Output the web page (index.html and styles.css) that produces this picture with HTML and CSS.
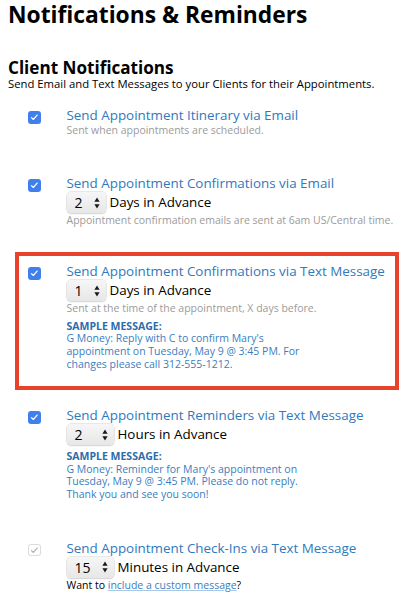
FILE: index.html
```html
<!DOCTYPE html>
<html lang="en">
<head>
    <meta charset="UTF-8">
    <meta name="viewport" content="width=device-width, initial-scale=1.0">
    <title>Notifications &amp; Reminders</title>
    <link rel="stylesheet" href="styles.css">
</head>
<body>
    <h1>Notifications &amp; Reminders</h1>

    <h2>Client Notifications</h2>
    <p class="intro">Send Email and Text Messages to your Clients for their Appointments.</p>

    <ul class="options">
        <li class="option">
            <span class="check"><svg viewBox="0 0 13 13"><path d="M3.6 6.9l2 1.9 3.9-4.6"/></svg></span>
            <div class="body">
                <div class="label">Send Appointment Itinerary via Email</div>
                <div class="note">Sent when appointments are scheduled.</div>
            </div>
        </li>

        <li class="option">
            <span class="check"><svg viewBox="0 0 13 13"><path d="M3.6 6.9l2 1.9 3.9-4.6"/></svg></span>
            <div class="body">
                <div class="label">Send Appointment Confirmations via Email</div>
                <div class="advance">
                    <span class="picker"><span class="value">2</span><svg viewBox="0 0 6 12"><path d="M3 0.5l2.6 4.2H0.4zM3 11.5l2.6-4.2H0.4z"/></svg></span>
                    Days in Advance
                </div>
                <div class="note">Appointment confirmation emails are sent at 6am US/Central time.</div>
            </div>
        </li>

        <li class="option highlight">
            <span class="check"><svg viewBox="0 0 13 13"><path d="M3.6 6.9l2 1.9 3.9-4.6"/></svg></span>
            <div class="body">
                <div class="label">Send Appointment Confirmations via Text Message</div>
                <div class="advance">
                    <span class="picker"><span class="value">1</span><svg viewBox="0 0 6 12"><path d="M3 0.5l2.6 4.2H0.4zM3 11.5l2.6-4.2H0.4z"/></svg></span>
                    Days in Advance
                </div>
                <div class="note">Sent at the time of the appointment, X days before.</div>
                <div class="sample">
                    <strong>SAMPLE MESSAGE:</strong>
                    G Money: Reply with C to confirm Mary's<br>
                    appointment on Tuesday, May 9 @ 3:45 PM. For<br>
                    changes please call 312-555-1212.
                </div>
            </div>
        </li>

        <li class="option">
            <span class="check"><svg viewBox="0 0 13 13"><path d="M3.6 6.9l2 1.9 3.9-4.6"/></svg></span>
            <div class="body">
                <div class="label">Send Appointment Reminders via Text Message</div>
                <div class="advance">
                    <span class="picker wide"><span class="value">2</span><svg viewBox="0 0 6 12"><path d="M3 0.5l2.6 4.2H0.4zM3 11.5l2.6-4.2H0.4z"/></svg></span>
                    Hours in Advance
                </div>
                <div class="sample">
                    <strong>SAMPLE MESSAGE:</strong>
                    G Money: Reminder for Mary's appointment on<br>
                    Tuesday, May 9 @ 3:45 PM. Please do not reply.<br>
                    Thank you and see you soon!
                </div>
            </div>
        </li>

        <li class="option">
            <span class="check off"><svg viewBox="0 0 13 13"><path d="M3.6 6.9l2 1.9 3.9-4.6"/></svg></span>
            <div class="body">
                <div class="label">Send Appointment Check-Ins via Text Message</div>
                <div class="advance">
                    <span class="picker wide"><span class="value">15</span><svg viewBox="0 0 6 12"><path d="M3 0.5l2.6 4.2H0.4zM3 11.5l2.6-4.2H0.4z"/></svg></span>
                    Minutes in Advance
                </div>
                <div class="custom">Want to <a href="#">include a custom message</a>?</div>
            </div>
        </li>
    </ul>
</body>
</html>
```

FILE: styles.css
```css
body {
    margin: 0;
    padding: 0 8px;
    font-family: "Open Sans", Arial, sans-serif;
    color: #000;
    background: #fff;
}
h1 {
    margin: 0;
    padding-top: 1px;
    font-size: 22.8px;
    line-height: 27px;
    font-weight: 700;
}
h2 {
    margin: 31px 0 0;
    font-size: 17.1px;
    line-height: 17px;
    font-weight: 700;
}
.intro {
    margin: 1px 0 0;
    font-size: 11.3px;
    line-height: 13px;
}

/* notification list */
.options {
    list-style: none;
    margin: 17px 0 0;
    padding: 0;
}
.option {
    display: flex;
    margin: 38px 0 0 7px;
    padding: 0 0 0 9px;
    border: 0 solid transparent;
    border-left-width: 4px;
}
.option:first-child {
    margin-top: 0;
}
.highlight {
    margin: 25px -5px -21px 7px;
    padding: 7px 0 16px 9px;
    border: 4px solid #e8412c;
}
.highlight + .option + .option {
    margin-top: 39px;
}
.check {
    flex: none;
    width: 12.5px;
    height: 12.5px;
    margin-top: 4px;
    margin-right: 26px;
    border-radius: 3px;
    background: #3f80ee;
}
.check svg {
    display: block;
    width: 12.5px;
    height: 12.5px;
    fill: none;
    stroke: #fff;
    stroke-width: 1.3;
    stroke-linecap: round;
    stroke-linejoin: round;
}
.check.off {
    background: #fff;
    box-shadow: inset 0 0 0 1px #dcdcdc;
}
.check.off svg {
    stroke: #b3b3b3;
}
.body {
    flex: 1;
    min-width: 0;
}
.label {
    font-size: 13.4px;
    line-height: 16px;
    color: #2f79bd;
    white-space: nowrap;
}
.advance {
    display: flex;
    align-items: center;
    gap: 4px;
    margin-top: 1px;
    font-size: 13.4px;
    line-height: 21px;
}
.picker {
    display: inline-flex;
    align-items: center;
    justify-content: space-between;
    box-sizing: border-box;
    width: 39px;
    height: 21px;
    padding: 0 6px 0 8px;
    border-radius: 4px;
    background: linear-gradient(#f6f6f6, #e7e7e7);
    box-shadow: 0 0 0 0.5px #d2d2d2, 0 1px 1.5px rgba(0, 0, 0, 0.15);
    font-size: 14px;
}
.picker.wide {
    width: 47px;
}
.picker svg {
    width: 6px;
    height: 12px;
    fill: #1a1a1a;
}
.note {
    font-size: 10.5px;
    line-height: 14px;
    color: #9b9b9b;
    white-space: nowrap;
}
.sample {
    margin-top: 4.5px;
    font-size: 10.5px;
    line-height: 12.7px;
    color: #3a7dc1;
}
.sample strong {
    display: block;
    color: #2d6cab;
}
.custom {
    font-size: 10.5px;
    line-height: 14px;
}
.custom a {
    color: #3a7dc1;
    text-decoration: underline;
    text-decoration-color: #a9c8e6;
}
```
